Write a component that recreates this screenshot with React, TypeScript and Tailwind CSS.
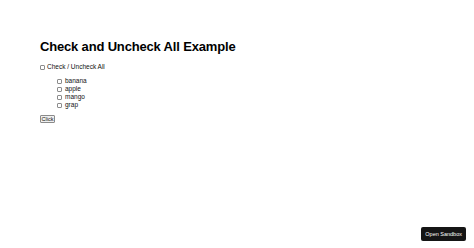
import { useState } from "react";

const FRUITS = ["banana", "apple", "mango", "grap"];

function Box({ checked, onChange }: { checked: boolean; onChange: () => void }) {
  return (
    <input
      type="checkbox"
      className="m-0 h-[5px] w-[5px] shrink-0 appearance-none rounded-[1px] border-[0.75px] border-[#8c8c8c] bg-white checked:bg-[#1a73e8]"
      checked={checked}
      onChange={onChange}
    />
  );
}

export default function App() {
  const [checked, setChecked] = useState<string[]>([]);
  const all = checked.length === FRUITS.length;

  function toggle(name: string) {
    setChecked((prev) => (prev.includes(name) ? prev.filter((f) => f !== name) : [...prev, name]));
  }

  return (
    <div className="relative h-[248px] w-[474px] bg-white font-['Liberation_Sans',Arial,sans-serif] text-[#111]">
      <div className="px-[40px] pt-[39px]">
        <h1 className="text-[13px] font-bold leading-[16px] tracking-[-0.17px] text-black">
          Check and Uncheck All Example
        </h1>
        <label className="mt-[8px] flex items-center gap-[2px] text-[6.5px] leading-[8px]">
          <Box checked={all} onChange={() => setChecked(all ? [] : FRUITS)} />
          <span>Check / Uncheck All</span>
        </label>
        <ul className="mt-[6px] flex flex-col pl-[17px]">
          {FRUITS.map((fruit) => (
            <li key={fruit} className="flex items-center gap-[3px] text-[6.5px] leading-[8px]">
              <Box checked={checked.includes(fruit)} onChange={() => toggle(fruit)} />
              <span>{fruit}</span>
            </li>
          ))}
        </ul>
        <button
          type="button"
          className="mt-[6px] block h-[8px] w-[15px] rounded-[1px] border-[0.75px] border-[#8a8a8a] bg-[#efefef] p-0 text-center text-[5.5px] leading-[6px]"
        >
          Click
        </button>
      </div>
      <button
        type="button"
        className="absolute bottom-[7px] right-[8px] rounded-[2px] bg-[#151515] px-[4px] py-[3px] text-[5.5px] leading-[8px] text-white"
      >
        Open Sandbox
      </button>
    </div>
  );
}
